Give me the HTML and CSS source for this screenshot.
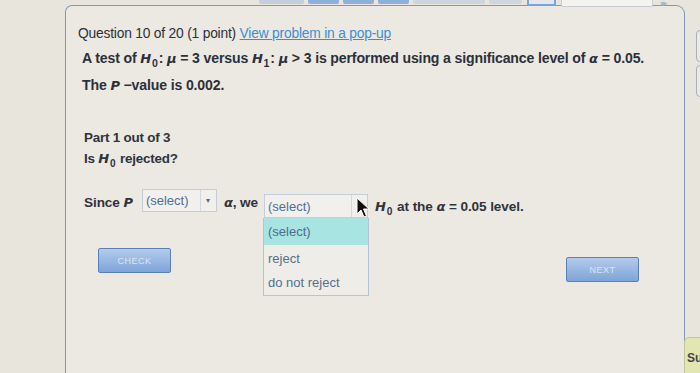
FILE: index.html
```html
<!DOCTYPE html>
<html>
<head>
<meta charset="utf-8">
<link rel="stylesheet" href="styles.css">
</head>
<body>
<div class="toolbar">
  <span class="tb tb-a"></span>
  <span class="tb tb-b"></span>
  <span class="tb tb-b"></span>
  <span class="tb tb-b"></span>
  <span class="tb tb-c"></span>
  <span class="tb tb-d"></span>
  <span class="tb tb-e"></span>
  <span class="tb tb-f"></span>
  <span class="tb-arrows">&#9656;&#9656;</span>
</div>
<div class="side">
  <span class="side-box"></span>
  <span class="side-box"></span>
</div>
<div class="panel">
  <div class="qhead">Question 10 of 20 (1 point) <a class="popup" href="#">View problem in a pop-up</a></div>
  <div class="stmt">
    <p>A test of <i>H</i><sub>0</sub>: <i>μ</i> = 3 versus <i>H</i><sub>1</sub>: <i>μ</i> &gt; 3 is performed using a significance level of <i>α</i> = 0.05.</p>
    <p>The <i>P</i> −value is 0.002.</p>
  </div>
  <div class="part">
    <p>Part 1 out of 3</p>
    <p>Is <i>H</i><sub>0</sub> rejected?</p>
  </div>
  <div class="answer">
    <span>Since <i>P</i></span>
    <span class="sel sel1"><span class="sel-text">(select)</span><span class="sel-arrow">▾</span></span>
    <span><i>α</i>, we</span>
    <span class="sel sel2"><span class="sel-text">(select)</span><span class="sel-arrow"></span>
      <span class="menu">
        <span class="opt opt-on">(select)</span>
        <span class="opt">reject</span>
        <span class="opt">do not reject</span>
      </span>
      <svg class="cursor" width="14" height="22" viewBox="0 0 14 22"><path d="M1 1 L1 17 L5 13 L8 20 L10.5 19 L7.5 12 L13 12 Z" fill="#111" stroke="#fff" stroke-width="1"/></svg>
    </span>
    <span class="tail"><i>H</i><sub>0</sub> at the <i>α</i> = 0.05 level.</span>
  </div>
  <div class="buttons">
    <span class="btn btn-check">CHECK</span>
    <span class="btn btn-next">NEXT</span>
  </div>
</div>
<div class="submit">Su</div>
</body>
</html>
```
FILE: styles.css
```css
html, body {
  margin: 0;
  padding: 0;
}
body {
  width: 700px;
  height: 373px;
  overflow: hidden;
  background: #e7e5dc;
  font-family: "Liberation Sans", Arial, sans-serif;
  color: #30333c;
  position: relative;
}
.toolbar {
  display: flex;
  align-items: flex-start;
  height: 5px;
  padding-left: 259px;
  gap: 4px;
}
.tb {
  display: block;
  height: 4px;
  border-radius: 0 0 2px 2px;
}
.tb-a { width: 45px; background: #c3cfdc; }
.tb-b { width: 31px; background: #8fb1d9; }
.tb-c { width: 72px; background: #cdd6de; }
.tb-d { width: 33px; background: #cfd7de; }
.tb-e { width: 29px; height: 6px; border: 2px solid #78a5d8; border-top: 0; background: #e2e8ee; box-sizing: border-box; margin-left: 1px; }
.tb-f { width: 92px; height: 7px; border: 1px solid #c8ccd2; border-top: 0; background: #f4f3ef; box-sizing: border-box; margin-left: 1px; }
.tb-arrows {
  font-size: 9px;
  line-height: 6px;
  color: #a7b6c8;
  margin-left: 4px;
  letter-spacing: -3px;
}
.side {
  position: absolute;
  left: 696px;
  top: 30px;
  display: flex;
  flex-direction: column;
  gap: 3px;
}
.side-box {
  display: block;
  width: 10px;
  height: 30px;
  border: 1px solid #a9afb8;
  border-radius: 4px;
  background: #eceae4;
}
.panel {
  margin-left: 65px;
  width: 620px;
  height: 400px;
  border: 1px solid #8397b8;
  border-bottom: 0;
  border-radius: 7px 9px 0 0;
  background: #ebe9e2;
  box-sizing: border-box;
  padding-left: 12px;
  padding-top: 20px;
}
.qhead {
  font-size: 13.8px;
  line-height: 16px;
  color: #2e3036;
  letter-spacing: -0.2px;
}
.popup {
  color: #3d8ed0;
  text-decoration: underline;
}
p { margin: 0; }
sub {
  font-size: 75%;
  vertical-align: -4px;
  line-height: 0;
  margin-left: 1px;
  margin-right: 1px;
}
.stmt {
  margin-top: 3px;
  margin-left: 4px;
  font-weight: bold;
  font-size: 14.1px;
  line-height: 26px;
  letter-spacing: -0.15px;
  color: #2c303a;
}
.stmt i, .part i, .answer i, .tail i { font-family: "DejaVu Sans", sans-serif; font-size: 13px; }
.part {
  margin-top: 28px;
  margin-left: 6px;
  font-weight: bold;
  font-size: 13.4px;
  line-height: 21px;
  letter-spacing: -0.2px;
  color: #30333c;
}
.answer {
  margin-top: 20px;
  margin-left: 6px;
  display: flex;
  align-items: center;
  font-weight: bold;
  font-size: 13.6px;
  letter-spacing: -0.1px;
  color: #30333c;
  height: 26px;
}
.sel {
  display: flex;
  align-items: stretch;
  height: 23px;
  border: 1px solid #c5cdd9;
  background: #f1f0ec;
  box-sizing: border-box;
  font-weight: normal;
  font-size: 13px;
  color: #4f6f97;
  letter-spacing: 0;
  position: relative;
}
.sel1 {
  width: 75px;
  margin-left: 9px;
  margin-right: 7px;
  margin-top: -4px;
}
.sel2 {
  width: 104px;
  margin-left: 6px;
  margin-top: 8px;
  height: 24px;
}
.sel-text {
  flex: 1;
  display: flex;
  align-items: center;
  padding-left: 3px;
}
.sel-arrow {
  width: 15px;
  border-left: 1px solid #d2d8e0;
  display: flex;
  align-items: center;
  justify-content: center;
  font-size: 8px;
  color: #56688a;
}
.menu {
  position: absolute;
  left: -2px;
  top: 23px;
  width: 106px;
  height: 78px;
  border: 1px solid #b8c4d6;
  border-top: 0;
  background: #eeede8;
  display: flex;
  flex-direction: column;
  box-sizing: border-box;
}
.opt {
  display: block;
  height: 24px;
  line-height: 24px;
  padding-left: 4px;
  color: #53708f;
}
.opt-on {
  background: #a7e4e2;
  height: 27px;
  line-height: 27px;
  color: #4c6c8c;
}
.opt-on + .opt { margin-top: 2px; }
.cursor {
  position: absolute;
  left: 91px;
  top: 2px;
}
.tail {
  margin-left: 7px;
  margin-top: 8px;
}
.buttons {
  margin-top: 33px;
  margin-left: 20px;
  margin-right: 45px;
  display: flex;
  justify-content: space-between;
  align-items: flex-start;
}
.btn {
  display: flex;
  align-items: center;
  justify-content: center;
  width: 73px;
  height: 25px;
  box-sizing: border-box;
  border: 1px solid #5a80b8;
  border-radius: 2px;
  background: linear-gradient(#b3cbec, #7ea4d8);
  color: #dbe6f4;
  font-size: 9px;
  letter-spacing: 0.5px;
}
.btn-next {
  margin-top: 9px;
}
.submit {
  position: absolute;
  left: 684px;
  top: 337px;
  width: 30px;
  height: 40px;
  border: 1px solid #c2c69a;
  border-radius: 5px 0 0 0;
  background: #e2e6b2;
  box-sizing: border-box;
  padding-top: 13px;
  padding-left: 2px;
  font-size: 12px;
  font-weight: bold;
  color: #444;
}
```
